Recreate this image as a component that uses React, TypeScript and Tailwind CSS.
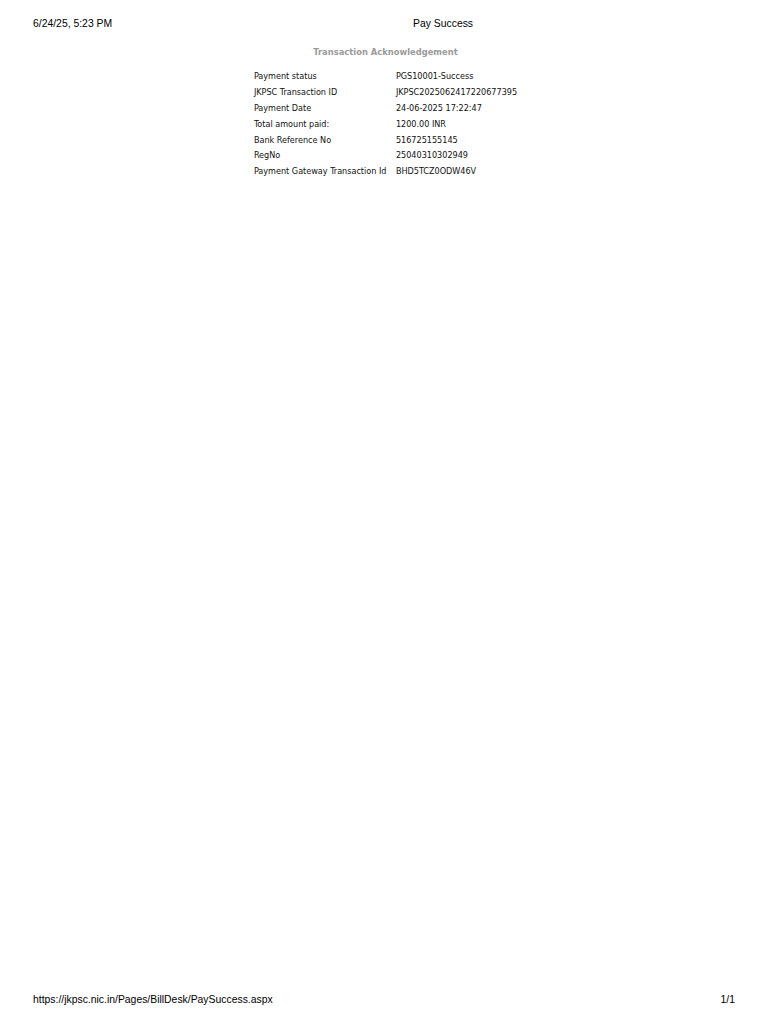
import React from "react";

const rows: [string, string][] = [
	["Payment status", "PGS10001-Success"],
	["JKPSC Transaction ID", "JKPSC2025062417220677395"],
	["Payment Date", "24-06-2025 17:22:47"],
	["Total amount paid:", "1200.00 INR"],
	["Bank Reference No", "516725155145"],
	["RegNo", "25040310302949"],
	["Payment Gateway Transaction Id", "BHD5TCZ0ODW46V"],
];

export default function App() {
	return (
		<div className="flex h-[1024px] w-[768px] flex-col bg-white text-black">
			<div className="flex items-center px-[33px] pt-[17px] font-['Liberation_Sans',Arial,sans-serif] text-[10.4px] leading-[13px]">
				<span className="w-[380px]">6/24/25, 5:23 PM</span>
				<span>Pay Success</span>
			</div>

			<div className="flex-1 pt-[15px] pl-[3px] font-['DejaVu_Sans_Condensed','DejaVu_Sans',sans-serif]">
				<h1 className="text-center text-[9.3px] font-bold leading-[13px] text-[#9a9a9a]">
					Transaction Acknowledgement
				</h1>
				<table className="mx-auto mt-[11px] text-[9px] leading-[13px] text-[#111]">
					<tbody>
						{rows.map(([label, value]) => (
							<tr key={label}>
								<td className="w-[142px] py-[1.4px] pr-1 whitespace-nowrap">{label}</td>
								<td className="py-[1.4px] whitespace-nowrap">{value}</td>
							</tr>
						))}
					</tbody>
				</table>
			</div>

			<div className="flex items-center justify-between px-[33px] pb-[18px] font-['Liberation_Sans',Arial,sans-serif] text-[10.4px] leading-[13px]">
				<span>https://jkpsc.nic.in/Pages/BillDesk/PaySuccess.aspx</span>
				<span>1/1</span>
			</div>
		</div>
	);
}
